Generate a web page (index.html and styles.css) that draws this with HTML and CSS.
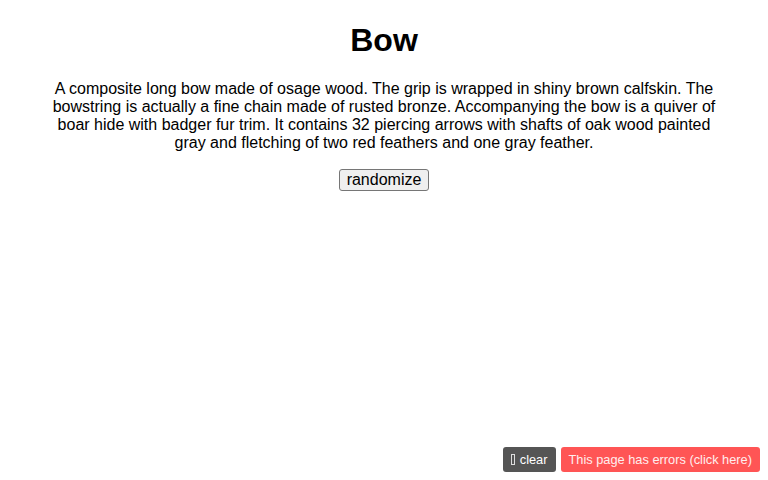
FILE: index.html
```html
<!DOCTYPE html>
<html lang="en">
<head>
    <meta charset="UTF-8">
    <meta name="viewport" content="width=device-width, initial-scale=1.0">
    <title>Bow</title>
    <link rel="stylesheet" href="styles.css">
</head>
<body>
    <div class="main">
        <h1>Bow</h1>
        <p class="desc">A composite long bow made of osage wood. The grip is wrapped in shiny brown calfskin. The bowstring is actually a fine chain made of rusted bronze. Accompanying the bow is a quiver of boar hide with badger fur trim. It contains 32 piercing arrows with shafts of oak wood painted gray and fletching of two red feathers and one gray feather.</p>
        <button class="rand-btn" type="button">randomize</button>
    </div>

    <div class="err-bar">
        <div class="err-clear"><span class="icon-box"></span> clear</div>
        <div class="err-msg">This page has errors (click here)</div>
    </div>
</body>
</html>
```

FILE: styles.css
```css
body {
    margin: 8px;
    font-family: "Liberation Sans", Arial, sans-serif;
    color: #000;
    background: #fff;
}

.main {
    text-align: center;
    padding: 0 40px;
}

h1 {
    font-size: 32px;
    margin: 14px 0 21px;
}

.desc {
    font-size: 16px;
    line-height: 18px;
    margin: 16px 0 17px;
}

.rand-btn {
    font-family: "Liberation Sans", Arial, sans-serif;
    font-size: 16px;
    line-height: 18px;
    padding: 1px 7px;
    color: #000;
    background: #efefef;
    border: 1px solid #767676;
    border-radius: 3px;
}

.err-bar {
    position: fixed;
    right: 8px;
    bottom: 8px;
    display: flex;
    gap: 5px;
    font-size: 12.8px;
}

.err-clear, .err-msg {
    height: 25px;
    line-height: 25px;
    padding: 0 8px;
    border-radius: 3px;
    color: #fff;
}

.err-clear {
    background: #555;
}

.err-msg {
    background: #f55;
    color: #fee;
}

.icon-box {
    display: inline-block;
    width: 2px;
    height: 9px;
    margin-right: 1px;
    border: 1px solid #ddd;
    vertical-align: -1px;
}
```
